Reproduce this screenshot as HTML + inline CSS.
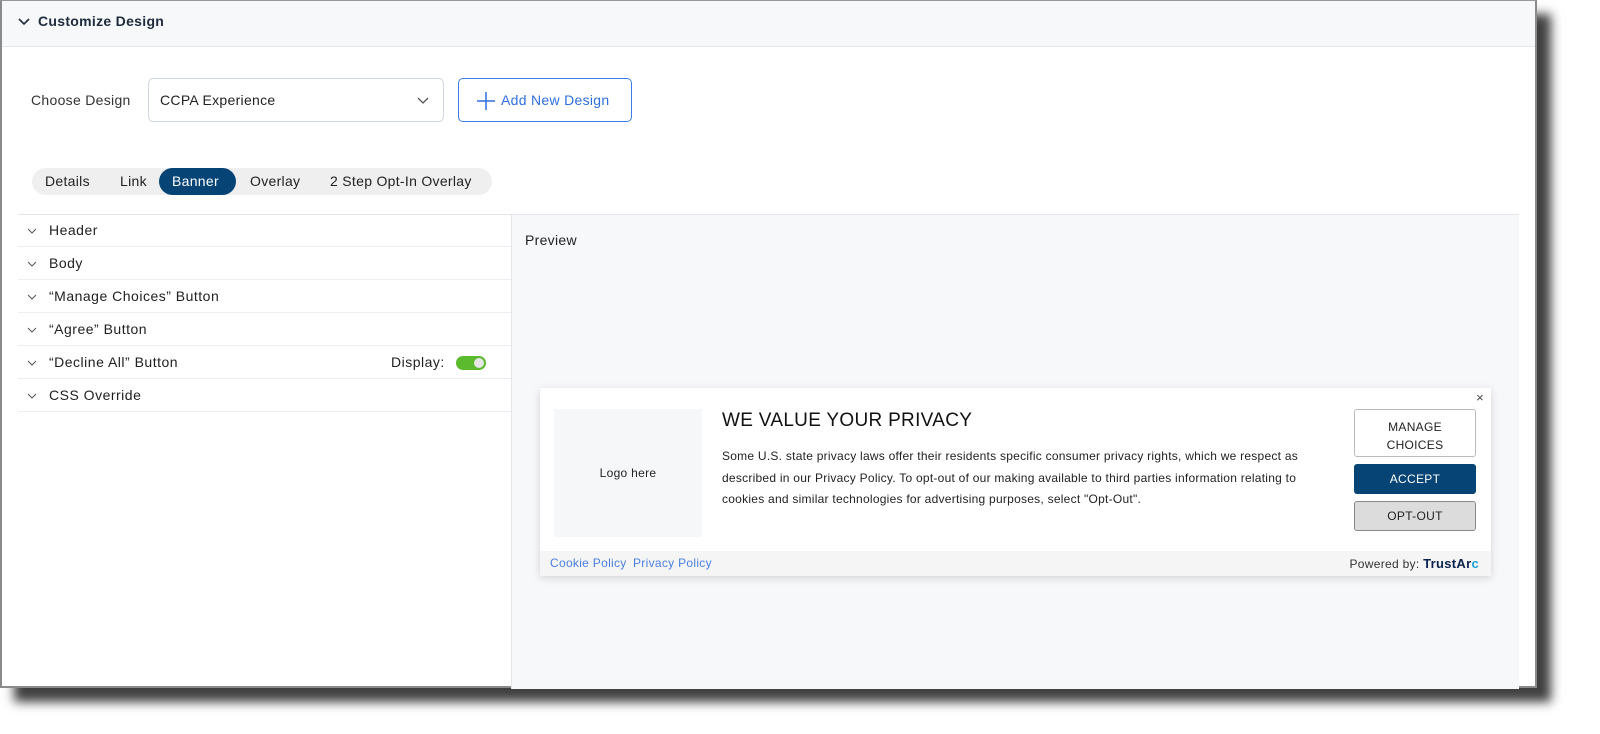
<!DOCTYPE html>
<html><head><style>
*{box-sizing:border-box;margin:0;padding:0}
body{width:1600px;height:734px;background:#fff;font-family:"Liberation Sans",sans-serif;position:relative;overflow:hidden;color:#1f2937;letter-spacing:0.3px}
.win{position:absolute;left:0;top:0;width:1537px;height:688px;border:2px solid #8a8a8a;border-top:1px solid #999;background:#fff;box-shadow:14px 14px 10px rgba(0,0,0,.75)}
.hdr{position:absolute;left:0;top:0;right:0;height:46px;background:#f7f8fa;border-bottom:1px solid #e3e7ee}
.hdr span{position:absolute;left:36px;top:12px;font-size:14px;font-weight:bold;color:#1e2b3c}
.abs{position:absolute}
.sel{left:146px;top:77px;width:296px;height:44px;border:1px solid #cfd6e2;border-radius:5px;font-size:14px;padding:13px 11px;color:#222}
.addb{left:456px;top:77px;width:174px;height:44px;border:1px solid #3d7ee6;border-radius:5px;color:#2f6fde;font-size:14px;padding:13px 0 0 42px}
.tabs{left:30px;top:167px;width:460px;height:27px;background:#efefef;border-radius:14px;font-size:14px}
.tabs span{position:absolute;top:5px;color:#222}
.ban{left:127px;width:77px;height:27px;background:#064476;border-radius:14px;color:#fff!important;padding-left:13px;top:0!important;line-height:27px}
.row{position:absolute;left:16px;width:493px;height:33px;border-bottom:1px solid #eceef1;font-size:14px;color:#1f1f1f;letter-spacing:0.5px}
.row span{position:absolute;left:31px;top:8px}
.row svg{position:absolute;left:9px;top:14px}
.prev{left:509px;top:213px;width:1008px;height:475px;background:#f7f8fa;border-left:1px solid #e3e6ea;border-top:1px solid #e3e6ea}
.bn{left:538px;top:387px;width:951px;height:188px;background:#fff;box-shadow:0 2px 8px rgba(0,0,0,.15)}
.btn{position:absolute;left:814px;width:122px;border-radius:3px;font-size:12px;text-align:center}
</style></head><body>
<div class="win">
<div class="hdr"><svg class="abs" style="left:16px;top:17px" width="12" height="8"><path d="M1 1l5 5 5-5" stroke="#1e2b3c" stroke-width="1.6" fill="none"/></svg><span>Customize Design</span></div>
<div class="abs" style="left:29px;top:91px;font-size:14px;color:#333">Choose Design</div>
<div class="abs sel">CCPA Experience<svg class="abs" style="right:14px;top:18px" width="12" height="8"><path d="M1 1l5 5 5-5" stroke="#555" stroke-width="1.3" fill="none"/></svg></div>
<div class="abs addb"><svg class="abs" style="left:18px;top:13px" width="18" height="18"><path d="M9 0v18M0 9h18" stroke="#2f6fde" stroke-width="1.5"/></svg>Add New Design</div>
<div class="abs tabs"><span style="left:13px">Details</span><span style="left:88px">Link</span><span class="ban abs">Banner</span><span style="left:218px">Overlay</span><span style="left:298px">2 Step Opt-In Overlay</span></div>
<div class="abs" style="left:16px;top:213px;width:493px;border-top:1px solid #e3e6ea"></div>
<div class="row" style="top:213px"><svg width="10" height="6"><path d="M1 1l4 4 4-4" stroke="#555" fill="none"/></svg><span>Header</span></div>
<div class="row" style="top:246px"><svg width="10" height="6"><path d="M1 1l4 4 4-4" stroke="#555" fill="none"/></svg><span>Body</span></div>
<div class="row" style="top:279px"><svg width="10" height="6"><path d="M1 1l4 4 4-4" stroke="#555" fill="none"/></svg><span>“Manage Choices” Button</span></div>
<div class="row" style="top:312px"><svg width="10" height="6"><path d="M1 1l4 4 4-4" stroke="#555" fill="none"/></svg><span>“Agree” Button</span></div>
<div class="row" style="top:345px"><svg width="10" height="6"><path d="M1 1l4 4 4-4" stroke="#555" fill="none"/></svg><span>“Decline All” Button</span><span style="left:373px">Display:</span><div class="abs" style="left:438px;top:10px;width:30px;height:14px;background:#5cba2e;border-radius:7px"><div class="abs" style="right:2px;top:2px;width:10px;height:10px;border-radius:5px;background:#e6e6e6"></div></div></div>
<div class="row" style="top:378px"><svg width="10" height="6"><path d="M1 1l4 4 4-4" stroke="#555" fill="none"/></svg><span>CSS Override</span></div>
<div class="abs prev"><div class="abs" style="left:13px;top:17px;font-size:14px;color:#222">Preview</div></div>
<div class="abs bn">
<div class="abs" style="left:14px;top:21px;width:148px;height:128px;background:#f6f7f9;font-size:12px;text-align:center;line-height:128px;color:#222">Logo here</div>
<div class="abs" style="left:182px;top:22px;font-size:19px;color:#111">WE VALUE YOUR PRIVACY</div>
<div class="abs" style="left:182px;top:58px;width:605px;font-size:12px;line-height:21.5px;color:#222;letter-spacing:0.25px">Some U.S. state privacy laws offer their residents specific consumer privacy rights, which we respect as described in our Privacy Policy. To opt-out of our making available to third parties information relating to cookies and similar technologies for advertising purposes, select "Opt-Out".</div>
<div class="abs" style="right:7px;top:2px;font-size:13px;color:#444">×</div>
<div class="btn" style="top:21px;height:48px;border:1px solid #bbb;padding-top:8px;line-height:18px;color:#222">MANAGE<br>CHOICES</div>
<div class="btn" style="top:76px;height:30px;background:#064476;color:#fff;line-height:30px">ACCEPT</div>
<div class="btn" style="top:113px;height:30px;background:#dcdcdc;border:1px solid #888;line-height:28px;color:#222">OPT-OUT</div>
<div class="abs" style="left:0;top:163px;width:951px;height:25px;background:#f5f5f5;font-size:12px">
<span class="abs" style="left:10px;top:5px;color:#4a7fe0">Cookie Policy</span><span class="abs" style="left:93px;top:5px;color:#4a7fe0">Privacy Policy</span>
<span class="abs" style="right:12px;top:5px;color:#333">Powered by: <b style="color:#0b2350;font-size:13px">TrustAr<span style="color:#1aa3d9">c</span></b></span></div>
</div>
</div>
</body></html>
